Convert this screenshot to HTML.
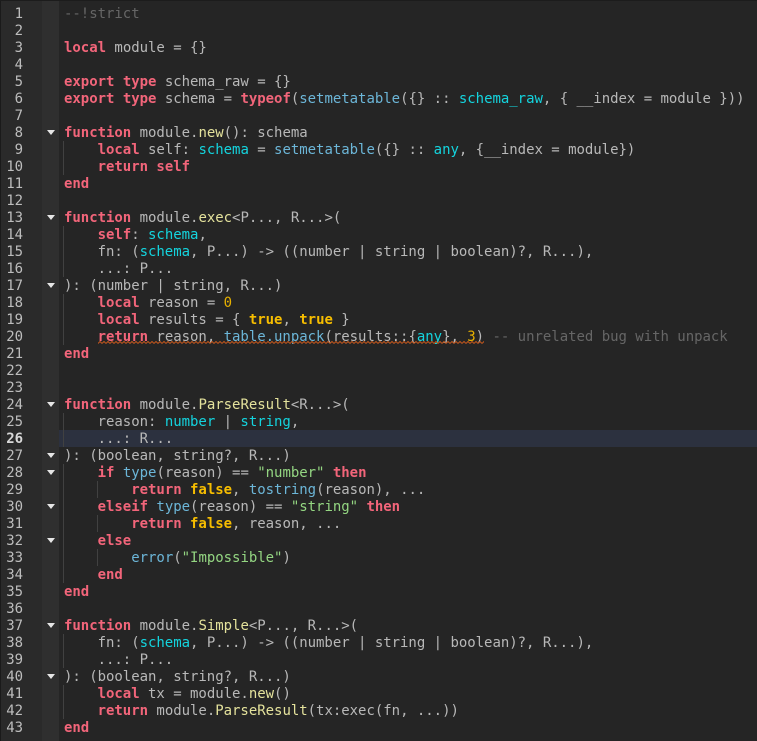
<!DOCTYPE html>
<html><head><meta charset="utf-8">
<style>
html,body{margin:0;padding:0;background:#252525;}
#r{position:relative;width:757px;height:741px;overflow:hidden;background:#252525;font-family:"DejaVu Sans Mono","Liberation Mono",monospace;font-size:14px;line-height:17px;color:#b8b8b8;letter-spacing:-0.028px;}
#g1{position:absolute;left:0;top:0;width:42px;height:741px;background:#2a2a2a;}
#g2{position:absolute;left:42px;top:0;width:17px;height:741px;background:#2f2f2f;}
#e1{position:absolute;left:0;top:0;width:1px;height:741px;background:#1a1a1a;}
#e2{position:absolute;left:0;top:0;width:757px;height:1px;background:#1c1c1c;}
#hl{position:absolute;left:59px;top:430px;width:698px;height:17px;background:#2c313f;}
.n{position:absolute;left:0;width:23px;margin-top:1px;text-align:right;color:#bdbdbd;white-space:pre;}
.c{position:absolute;left:64px;white-space:pre;margin:1px 0 0;}
.k{color:#f2657a;font-weight:bold}
.f{color:#6cb6d8}
.m{color:#e4e29c}
.t{color:#14d4de}
.o{color:#f6bd00;font-weight:bold}
.d{color:#e6b000}
.s{color:#94d682}
.g{color:#666}
.i{position:absolute;width:1px;background:#414141;}
.a{position:absolute;left:47px;width:0;height:0;border-left:4px solid transparent;border-right:4px solid transparent;border-top:5px solid #e6e6e6;}
</style></head><body><div id="r">
<div id="g1"></div><div id="g2"></div><div id="e1"></div><div id="e2"></div><div id="hl"></div>

<div class="i" style="left:63px;top:141px;height:34px"></div>
<div class="i" style="left:63px;top:226px;height:51px"></div>
<div class="i" style="left:63px;top:294px;height:51px"></div>
<div class="i" style="left:63px;top:413px;height:34px"></div>
<div class="i" style="left:63px;top:464px;height:119px"></div>
<div class="i" style="left:97px;top:481px;height:17px"></div>
<div class="i" style="left:97px;top:515px;height:17px"></div>
<div class="i" style="left:97px;top:549px;height:17px"></div>
<div class="i" style="left:63px;top:634px;height:34px"></div>
<div class="i" style="left:63px;top:685px;height:34px"></div>

<div class="a" style="top:130px"></div>
<div class="a" style="top:215px"></div>
<div class="a" style="top:283px"></div>
<div class="a" style="top:402px"></div>
<div class="a" style="top:453px"></div>
<div class="a" style="top:470px"></div>
<div class="a" style="top:504px"></div>
<div class="a" style="top:538px"></div>
<div class="a" style="top:623px"></div>
<div class="a" style="top:674px"></div>

<div class="n" style="top:5px">1</div>
<div class="n" style="top:22px">2</div>
<div class="n" style="top:39px">3</div>
<div class="n" style="top:56px">4</div>
<div class="n" style="top:73px">5</div>
<div class="n" style="top:90px">6</div>
<div class="n" style="top:107px">7</div>
<div class="n" style="top:124px">8</div>
<div class="n" style="top:141px">9</div>
<div class="n" style="top:158px">10</div>
<div class="n" style="top:175px">11</div>
<div class="n" style="top:192px">12</div>
<div class="n" style="top:209px">13</div>
<div class="n" style="top:226px">14</div>
<div class="n" style="top:243px">15</div>
<div class="n" style="top:260px">16</div>
<div class="n" style="top:277px">17</div>
<div class="n" style="top:294px">18</div>
<div class="n" style="top:311px">19</div>
<div class="n" style="top:328px">20</div>
<div class="n" style="top:345px">21</div>
<div class="n" style="top:362px">22</div>
<div class="n" style="top:379px">23</div>
<div class="n" style="top:396px">24</div>
<div class="n" style="top:413px">25</div>
<div class="n" style="top:430px;font-weight:bold;color:#d8d8d8">26</div>
<div class="n" style="top:447px">27</div>
<div class="n" style="top:464px">28</div>
<div class="n" style="top:481px">29</div>
<div class="n" style="top:498px">30</div>
<div class="n" style="top:515px">31</div>
<div class="n" style="top:532px">32</div>
<div class="n" style="top:549px">33</div>
<div class="n" style="top:566px">34</div>
<div class="n" style="top:583px">35</div>
<div class="n" style="top:600px">36</div>
<div class="n" style="top:617px">37</div>
<div class="n" style="top:634px">38</div>
<div class="n" style="top:651px">39</div>
<div class="n" style="top:668px">40</div>
<div class="n" style="top:685px">41</div>
<div class="n" style="top:702px">42</div>
<div class="n" style="top:719px">43</div>

<div class="c" style="top:5px"><span class="g">--!strict</span></div>
<div class="c" style="top:39px"><span class="k">local</span> module = {}</div>
<div class="c" style="top:73px"><span class="k">export</span> <span class="k">type</span> schema_raw = {}</div>
<div class="c" style="top:90px"><span class="k">export</span> <span class="k">type</span> schema = <span class="k">typeof</span>(<span class="f">setmetatable</span>({} :: <span class="t">schema_raw</span>, { __index = module }))</div>
<div class="c" style="top:124px"><span class="k">function</span> module.<span class="m">new</span>(): schema</div>
<div class="c" style="top:141px">    <span class="k">local</span> self: <span class="t">schema</span> = <span class="f">setmetatable</span>({} :: <span class="t">any</span>, {__index = module})</div>
<div class="c" style="top:158px">    <span class="k">return</span> <span class="k">self</span></div>
<div class="c" style="top:175px"><span class="k">end</span></div>
<div class="c" style="top:209px"><span class="k">function</span> module.<span class="m">exec</span>&lt;P..., R...&gt;(</div>
<div class="c" style="top:226px">    <span class="k">self</span>: <span class="t">schema</span>,</div>
<div class="c" style="top:243px">    fn: (<span class="t">schema</span>, P...) -&gt; ((number | string | boolean)?, R...),</div>
<div class="c" style="top:260px">    ...: P...</div>
<div class="c" style="top:277px">): (number | string, R...)</div>
<div class="c" style="top:294px">    <span class="k">local</span> reason = <span class="d">0</span></div>
<div class="c" style="top:311px">    <span class="k">local</span> results = { <span class="o">true</span>, <span class="o">true</span> }</div>
<div class="c" style="top:328px">    <span class="k">return</span> reason, <span class="f">table.unpack</span>(results::{<span class="t">any</span>}, <span class="d">3</span>) <span class="g">-- unrelated bug with unpack</span></div>
<svg style="position:absolute;left:98px;top:341px" width="386" height="3" xmlns="http://www.w3.org/2000/svg"><defs><pattern id="w" width="4" height="3" patternUnits="userSpaceOnUse"><path d="M0 2.5L2 .5L4 2.5" fill="none" stroke="#c2561c" stroke-width="1"/></pattern></defs><rect width="386" height="3" fill="url(#w)"/></svg>
<div class="c" style="top:345px"><span class="k">end</span></div>
<div class="c" style="top:396px"><span class="k">function</span> module.<span class="m">ParseResult</span>&lt;R...&gt;(</div>
<div class="c" style="top:413px">    reason: <span class="t">number</span> | <span class="t">string</span>,</div>
<div class="c" style="top:430px">    ...: R...</div>
<div class="c" style="top:447px">): (boolean, string?, R...)</div>
<div class="c" style="top:464px">    <span class="k">if</span> <span class="f">type</span>(reason) == <span class="s">"number"</span> <span class="k">then</span></div>
<div class="c" style="top:481px">        <span class="k">return</span> <span class="o">false</span>, <span class="f">tostring</span>(reason), ...</div>
<div class="c" style="top:498px">    <span class="k">elseif</span> <span class="f">type</span>(reason) == <span class="s">"string"</span> <span class="k">then</span></div>
<div class="c" style="top:515px">        <span class="k">return</span> <span class="o">false</span>, reason, ...</div>
<div class="c" style="top:532px">    <span class="k">else</span></div>
<div class="c" style="top:549px">        <span class="f">error</span>(<span class="s">"Impossible"</span>)</div>
<div class="c" style="top:566px">    <span class="k">end</span></div>
<div class="c" style="top:583px"><span class="k">end</span></div>
<div class="c" style="top:617px"><span class="k">function</span> module.<span class="m">Simple</span>&lt;P..., R...&gt;(</div>
<div class="c" style="top:634px">    fn: (<span class="t">schema</span>, P...) -&gt; ((number | string | boolean)?, R...),</div>
<div class="c" style="top:651px">    ...: P...</div>
<div class="c" style="top:668px">): (boolean, string?, R...)</div>
<div class="c" style="top:685px">    <span class="k">local</span> tx = module.<span class="m">new</span>()</div>
<div class="c" style="top:702px">    <span class="k">return</span> module.<span class="m">ParseResult</span>(tx:exec(fn, ...))</div>
<div class="c" style="top:719px"><span class="k">end</span></div>
</div></body></html>
